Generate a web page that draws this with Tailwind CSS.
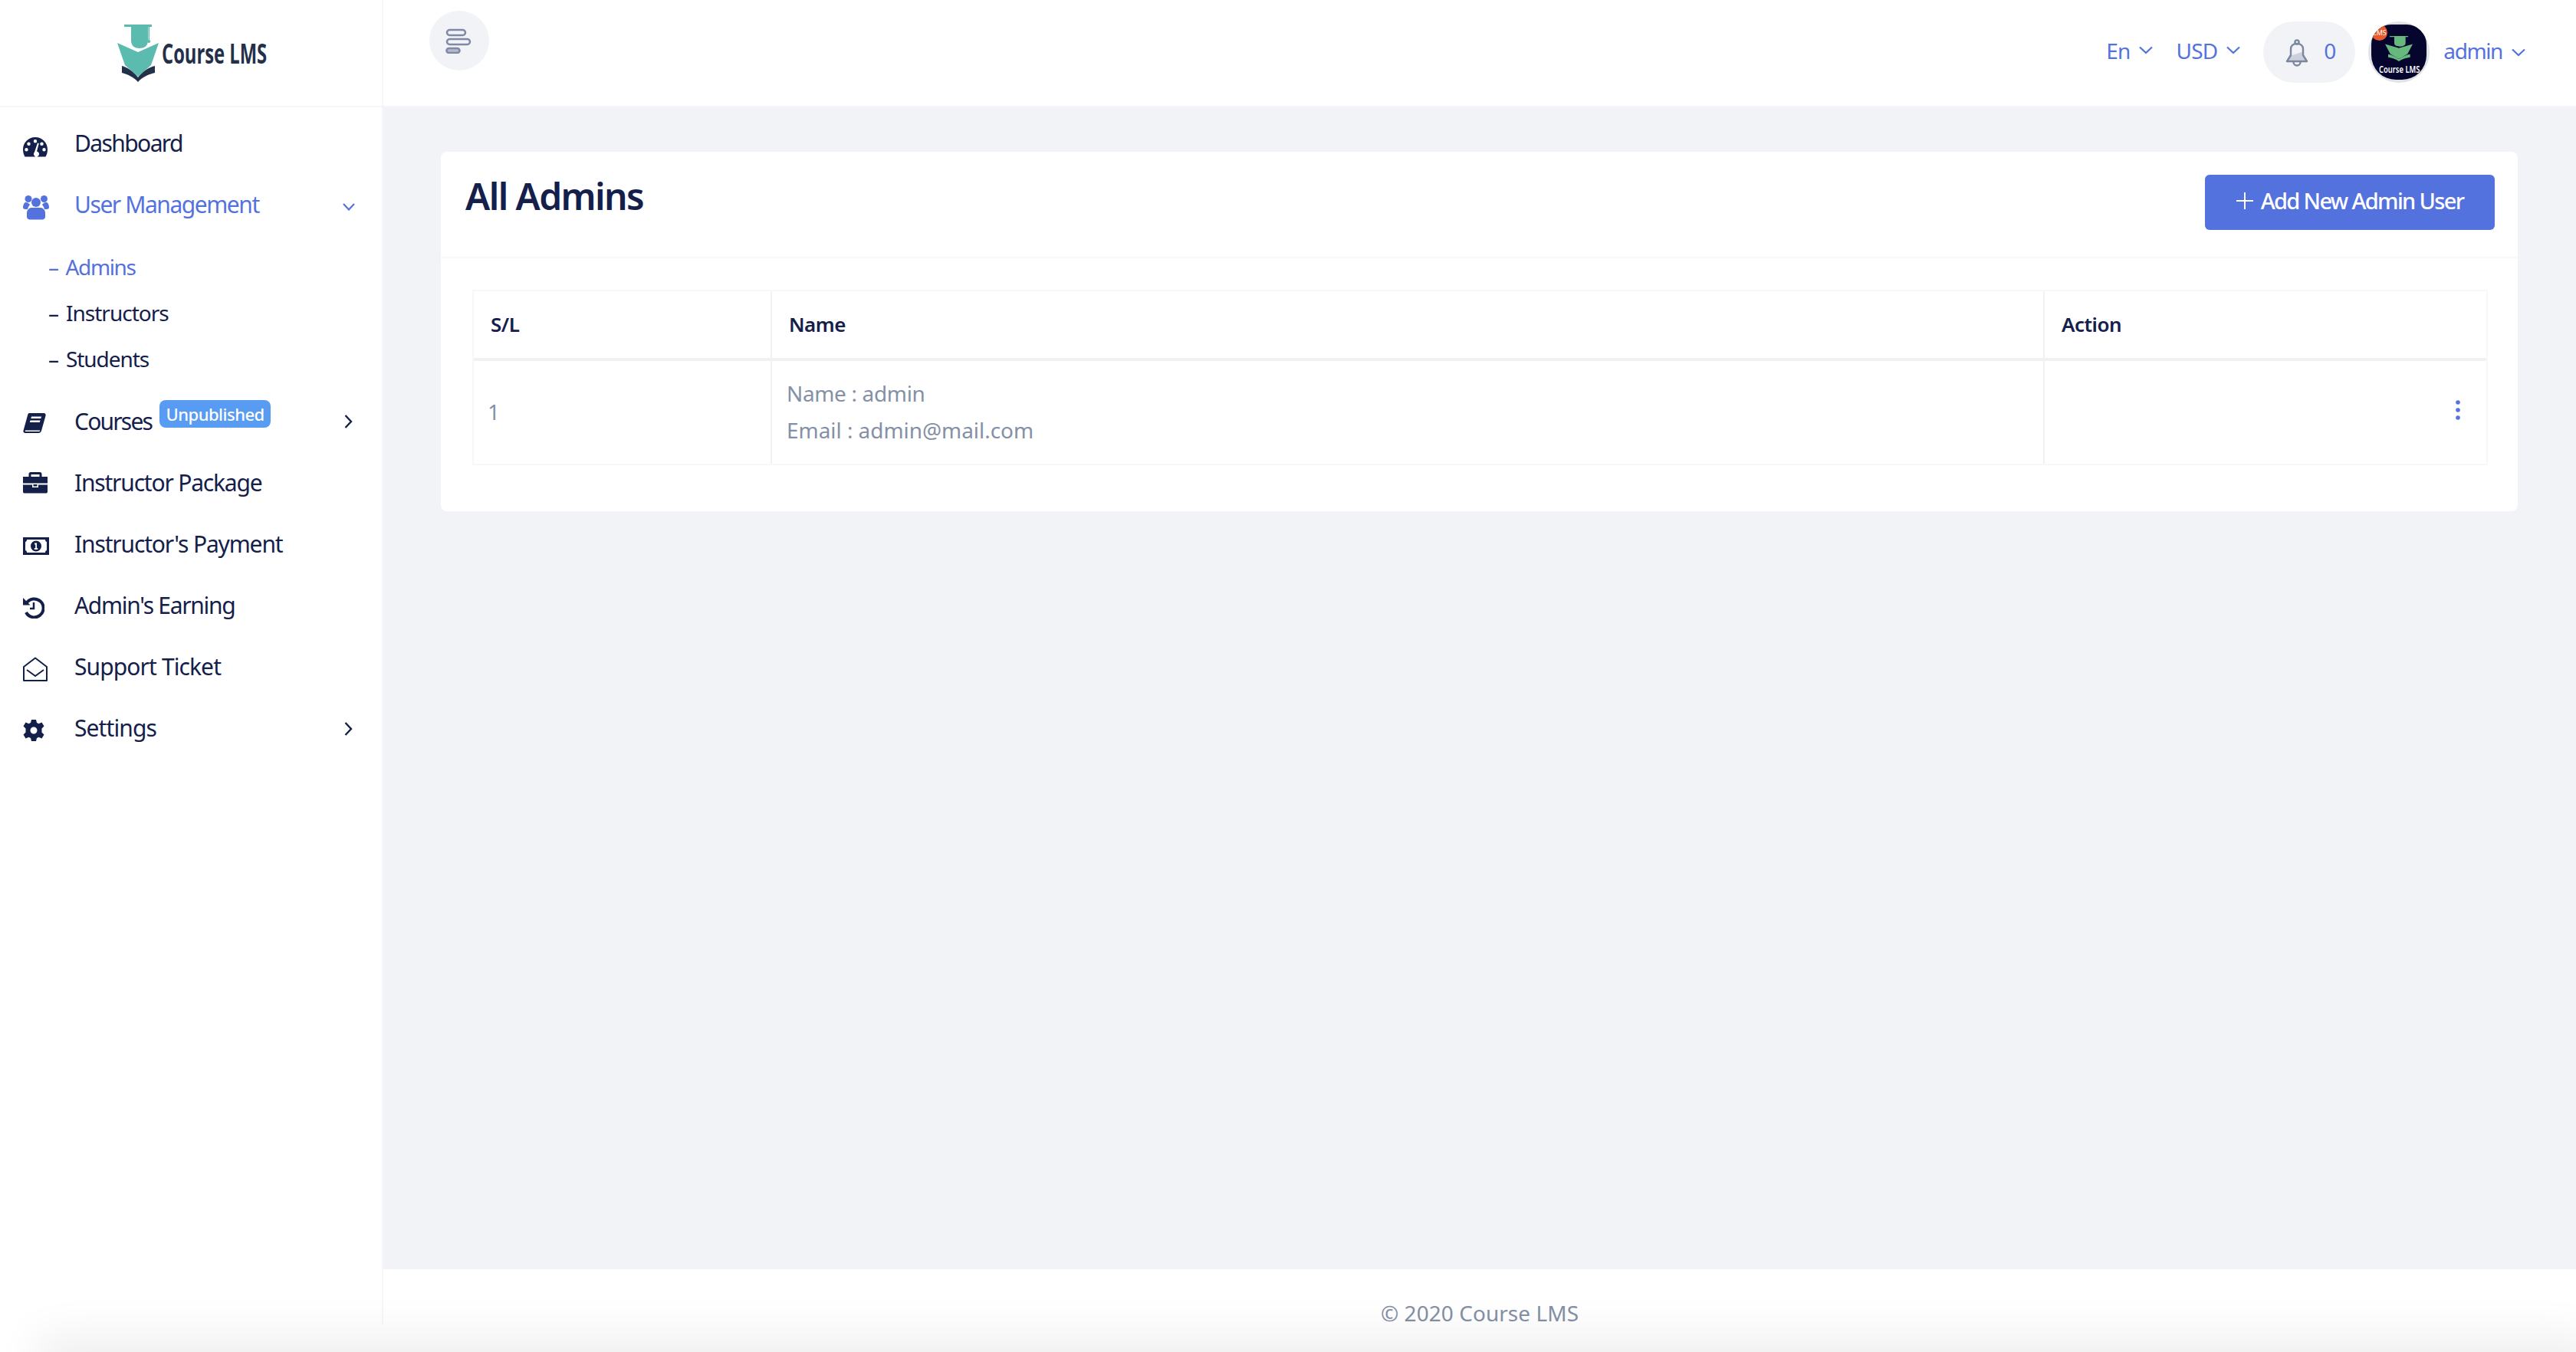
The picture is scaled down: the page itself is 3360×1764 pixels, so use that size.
<!DOCTYPE html>
<html><head><meta charset="utf-8"><script src="https://cdn.jsdelivr.net/npm/@tailwindcss/browser@4"></script></head>
<body class="m-0 font-['Noto_Sans',sans-serif] text-[#14204a]">
<div class="relative flex h-[1764px] w-[3360px] overflow-hidden bg-white">
  <aside class="flex h-[1728px] w-[500px] shrink-0 flex-col border-r-2 border-[#f6f6f8] bg-white">
    <div class="flex h-[140px] shrink-0 items-start border-b-2 border-[#f6f6f8] pl-[153px] pt-[32px]">
      <svg width="54" height="75" viewBox="0 0 54 75" class="shrink-0">
        <path d="M9 0H45V3H40V21C40 28 35 31 29 31C23 31 18 28 18 21V3H9Z" fill="#5bbbae"/>
        <path d="M40.500 3H42V20H40.500Z" fill="#5bbbae"/><circle cx="41.200" cy="22" r="2" fill="#5bbbae"/>
        <path d="M6 54C13 56 20 60 27 69C34 60 41 56 49 54V63C41 65 33 68 27 75C21 68 13 65 6 63Z" fill="#23304a"/>
        <path d="M0 24L27 36L54 24L44 53L27 68L10 53Z" fill="#5bbbae"/>
      </svg>
      <span class="ml-[4px] mt-[14px] inline-block origin-left scale-x-[0.66] text-[36px] leading-[48px] font-bold text-[#23304a] font-['Open_Sans',sans-serif] whitespace-nowrap">Course LMS</span>
    </div>
    <nav class="flex flex-col pl-[30px] pr-[34px] pt-[6px] text-[30px]">
      <div class="flex h-[80px] items-center">
        <svg width="32" height="26" viewBox="0 0 32 26" class="mt-[11px] shrink-0"><path fill="#14204a" fill-rule="evenodd" d="M16 0C7 0 0 7 0 16C0 20 1 23 2.500 25.500H29.500C31 23 32 20 32 16C32 7 25 0 16 0ZM16 3A2.200 2.200 0 1 1 16 7.400A2.200 2.200 0 1 1 16 3ZM7.500 6.500A2.200 2.200 0 1 1 7.500 11A2.200 2.200 0 1 1 7.500 6.500ZM24.500 6.500A2.200 2.200 0 1 1 24.500 11A2.200 2.200 0 1 1 24.500 6.500ZM4.500 14A2.200 2.200 0 1 1 4.500 18.400A2.200 2.200 0 1 1 4.500 14ZM27.500 14A2.200 2.200 0 1 1 27.500 18.400A2.200 2.200 0 1 1 27.500 14ZM19 7.500L20.800 8L18 18.500A3.500 3.500 0 1 1 15 19.500Z"/></svg>
        <span class="ml-[35px] tracking-[-1.6px]">Dashboard</span>
      </div>
      <div class="flex h-[80px] items-center text-[#5472de]">
        <svg width="34" height="32" viewBox="0 0 34 32" class="mt-[10px] shrink-0" fill="#5472de"><circle cx="7" cy="4.500" r="4.500"/><circle cx="27.500" cy="4.500" r="4.500"/><circle cx="17" cy="9" r="6"/><path d="M3 9C1 10 0 13 0 15.500C0 17 1 18 3 18H6C6.500 15 8 13.500 9 12C8 10 5 8.500 3 9Z"/><path d="M31 9C33 10 34 13 34 15.500C34 17 33 18 31 18H28C27.500 15 26 13.500 25 12C26 10 29 8.500 31 9Z"/><path d="M11 16H23C26 16 29 19 29 23V28C29 30 27 31.500 25 31.500H9C7 31.500 5 30 5 28V23C5 19 8 16 11 16Z"/></svg>
        <span class="ml-[33px] tracking-[-1.45px]">User Management</span>
        <svg width="16" height="10" viewBox="0 0 16 10" class="ml-auto mr-[1px] mt-[8px]" fill="none" stroke="#5472de" stroke-width="2.200"><path d="M1 1L8 8.500L15 1"/></svg>
      </div>
      <div class="flex flex-col pl-[33px] pt-[12px] text-[28px]">
        <div class="flex h-[60px] items-center tracking-[-1.4px] text-[#5472de]"><span class="mr-[10px]">–</span>Admins</div>
        <div class="flex h-[60px] items-center tracking-[-1px]"><span class="mr-[10px]">–</span>Instructors</div>
        <div class="flex h-[60px] items-center tracking-[-1.05px]"><span class="mr-[10px]">–</span>Students</div>
      </div>
      <div class="mt-[11px] flex h-[80px] items-center">
        <svg width="30" height="28" viewBox="0 0 30 28" class="mt-[7px] shrink-0"><path fill="#14204a" fill-rule="evenodd" d="M8 0H27C29 0 30 1.500 29.500 3.500L24 23C23.500 25 22 26 20 26H3C1 26 0 24.500 .5 23L1 21L6 3C6.500 1 7 0 8 0ZM11 4.500L10.300 7H23.300L24 4.500ZM9.500 9.500L8.800 12H21.800L22.500 9.500ZM3 22.500C2.500 23.500 3 24 4 24H20.500C21.500 24 22 23.500 22.300 22.500Z"/></svg>
        <span class="ml-[37px] tracking-[-1.8px]">Courses</span>
        <span class="ml-[10px] mt-[-18px] flex h-[36px] w-[145px] items-center justify-center rounded-[8px] bg-[#589bf3] text-[22px] font-medium tracking-[-0.5px] text-white">Unpublished</span>
        <svg width="11" height="18" viewBox="0 0 11 18" class="ml-auto mr-[4px] mt-[2px]" fill="none" stroke="#14204a" stroke-width="2.400"><path d="M1.500 1L9 9L1.500 17"/></svg>
      </div>
      <div class="flex h-[80px] items-center">
        <svg width="32" height="28" viewBox="0 0 32 28" class="mt-[2px] shrink-0"><path fill="#14204a" fill-rule="evenodd" d="M10 0H22C23.500 0 24.500 1 24.500 2.500V6H32V14.500H0V6H7.500V2.500C7.500 1 8.500 0 10 0ZM10.500 3V6H21.500V3ZM0 16.500H12V20H20V16.500H32V25.500C32 27 31 27.500 30 27.500H2C1 27.500 0 27 0 25.500ZM13.500 16H18.500V18.500H13.500Z"/></svg>
        <span class="ml-[35px] tracking-[-1.2px]">Instructor Package</span>
      </div>
      <div class="flex h-[80px] items-center">
        <svg width="34" height="23" viewBox="0 0 34 23" class="mt-[7px] shrink-0"><path fill="#14204a" fill-rule="evenodd" d="M0 0H34V23H0ZM5 3C5 5 4 6 3 6V17C4 17 5 18 5 20H29C29 18 30 17 31 17V6C30 6 29 5 29 3ZM17 4.500A7 7 0 1 1 17 18.500A7 7 0 1 1 17 4.500ZM15 7.500V9.500H16.200V14H14.800V16H19.200V14H18V7.500Z"/></svg>
        <span class="ml-[33px] tracking-[-1.15px]">Instructor's Payment</span>
      </div>
      <div class="flex h-[80px] items-center">
        <svg width="28" height="28" viewBox="0 0 28 28" class="mt-[7px] shrink-0"><path fill="none" stroke="#14204a" stroke-width="4" d="M4.500 8A12 12 0 1 1 4 20"/><path fill="#14204a" d="M0 1L9.500 10.500H0Z"/><path fill="none" stroke="#14204a" stroke-width="2.500" d="M14 7V15H9"/></svg>
        <span class="ml-[39px] tracking-[-1.3px]">Admin's Earning</span>
      </div>
      <div class="flex h-[80px] items-center">
        <svg width="32" height="32" viewBox="0 0 32 32" class="mt-[7px] shrink-0" fill="none" stroke="#14204a" stroke-width="2"><path d="M1 13L16 1.500L31 13V31H1Z" stroke-linejoin="round"/><path d="M5 17L16 25L27 17"/></svg>
        <span class="ml-[35px] tracking-[-0.9px]">Support Ticket</span>
      </div>
      <div class="flex h-[80px] items-center">
        <svg width="28" height="28" viewBox="0 0 28 28" class="mt-[7px] shrink-0"><path fill="#14204a" fill-rule="evenodd" d="M11 0H17L18 4L20.500 5.200L24.500 3.500L27.500 8.500L24.500 11.500V16.500L27.500 19.500L24.500 24.500L20.500 22.800L18 24L17 28H11L10 24L7.500 22.800L3.500 24.500L.5 19.500L3.500 16.500V11.500L.5 8.500L3.500 3.500L7.500 5.200L10 4ZM14 9.500A4.500 4.500 0 1 0 14 18.500A4.500 4.500 0 1 0 14 9.500Z"/></svg>
        <span class="ml-[39px] tracking-[-0.9px]">Settings</span>
        <svg width="11" height="18" viewBox="0 0 11 18" class="ml-auto mr-[4px] mt-[4px]" fill="none" stroke="#14204a" stroke-width="2.400"><path d="M1.500 1L9 9L1.500 17"/></svg>
      </div>
    </nav>
  </aside>
  <div class="flex min-w-0 flex-1 flex-col">
    <header class="flex h-[140px] shrink-0 items-start border-b-2 border-[#f6f6f8] bg-white">
      <div class="ml-[60px] mt-[14px] flex h-[78px] w-[78px] items-center justify-center rounded-full bg-[#f1f3f7]">
        <svg width="34" height="33" viewBox="0 0 34 33" class="mr-[2px]" fill="none" stroke="#7f89a6" stroke-width="2.500"><rect x="2" y="2" width="24" height="7" rx="3.500"/><rect x="2" y="14" width="30" height="7" rx="3.500"/><rect x="1.500" y="26" width="17" height="6" rx="3" fill="#b4bac9"/></svg>
      </div>
      <div class="ml-auto mr-[66px] mt-[28px] flex items-center text-[28px] tracking-[-0.8px] text-[#5472de]">
        <span class="mb-[4px]">En</span>
        <svg width="18" height="11" viewBox="0 0 18 11" class="ml-[12px] mb-[6px]" fill="none" stroke="#5472de" stroke-width="2.200"><path d="M1 1.500L9 9L17 1.500"/></svg>
        <span class="ml-[30px] mb-[4px]">USD</span>
        <svg width="18" height="11" viewBox="0 0 18 11" class="ml-[12px] mb-[6px]" fill="none" stroke="#5472de" stroke-width="2.200"><path d="M1 1.500L9 9L17 1.500"/></svg>
        <div class="ml-[30px] flex h-[80px] w-[120px] items-center rounded-[40px] bg-[#f1f3f7] pl-[29px]">
          <svg width="30" height="36" viewBox="0 0 30 36" class="mt-[2px]" fill="none" stroke="#7b86a0" stroke-width="2.400"><path d="M6 22L24 16V22L27 28H3Z" fill="#7b86a0" fill-opacity=".3" stroke="none"/><path d="M7 13C7 9 10 6 15 6C20 6 23 9 23 13V21L28 29H2L7 21Z" stroke-linejoin="round"/><circle cx="15" cy="4" r="2.600"/><path d="M10.500 30C10.500 33 13 34.500 15 34.500C17 34.500 19.500 33 19.500 30"/></svg>
          <span class="ml-[20px] mb-[4px]">0</span>
        </div>
        <div class="ml-[17px] flex h-[80px] w-[80px] items-center justify-center overflow-hidden rounded-full bg-[#e2e3e7]">
          <div class="relative h-[72px] w-[72px] overflow-hidden rounded-b-[32px] rounded-t-[26px] bg-[#05052e]">
            <svg width="36" height="33" viewBox="0 0 54 75" preserveAspectRatio="none" class="absolute left-[18px] top-[15px]"><path d="M9 0H45V3H40V21C40 28 35 31 29 31C23 31 18 28 18 21V3H9Z" fill="#67b87e"/><path d="M6 54C13 56 20 60 27 69C34 60 41 56 49 54V63C41 65 33 68 27 75C21 68 13 65 6 63Z" fill="#67b87e"/><path d="M0 24L27 36L54 24L44 53L27 68L10 53Z" fill="#67b87e"/></svg>
            <span class="absolute left-0 top-[48px] w-full scale-x-[0.72] text-center text-[13px] leading-[20px] font-semibold tracking-normal text-white whitespace-nowrap">Course LMS</span>
            <span class="absolute left-[0px] top-[0px] h-[21px] w-[21px] rounded-full bg-[#e85a2b] text-center text-[9px] leading-[21px] tracking-normal text-white">LMS</span>
          </div>
        </div>
        <span class="ml-[18px] mb-[4px] tracking-[-1.4px]">admin</span>
        <svg width="18" height="11" viewBox="0 0 18 11" class="ml-[12px]" fill="none" stroke="#5472de" stroke-width="2.200"><path d="M1 1.500L9 9L17 1.500"/></svg>
      </div>
    </header>
    <main class="min-h-0 flex-1 bg-[#f1f3f7] pl-[75px] pr-[76px] pt-[58px]">
      <section class="h-[469px] rounded-[8px] bg-white">
        <div class="flex h-[139px] items-start border-b-2 border-[#f8f8f9] pl-[30px] pr-[30px]">
          <h1 class="ml-[2px] mt-[26px] text-[48px] leading-[64px] font-semibold tracking-[-1.6px]">All Admins</h1>
          <button class="ml-auto mt-[30px] flex h-[72px] w-[378px] items-center justify-center rounded-[6px] bg-[#5472de] pb-[4px] text-[29px] font-medium tracking-[-1.65px] text-white">
            <svg width="22" height="22" viewBox="0 0 22 22" class="mr-[10px]" stroke="white" stroke-width="2"><path d="M11 0V22M0 11H22"/></svg>Add New Admin User
          </button>
        </div>
        <div class="pl-[41px] pr-[39px] pt-[41px]">
          <div class="grid h-[229px] grid-cols-[389px_1660px_1fr] grid-rows-[91px_134px] border-x-2 border-y-2 border-[#f8f8f9]">
            <div class="flex items-center border-b-4 border-r-2 border-b-[#f1f1f3] border-r-[#f1f1f3] pl-[22px] text-[26px] font-semibold tracking-[-0.5px]">S/L</div>
            <div class="flex items-center border-b-4 border-r-2 border-b-[#f1f1f3] border-r-[#f1f1f3] pl-[22px] text-[26px] font-semibold tracking-[-0.5px]">Name</div>
            <div class="flex items-center border-b-4 border-b-[#f1f1f3] pl-[22px] text-[26px] font-semibold tracking-[-0.5px]">Action</div>
            <div class="flex items-center border-r-2 border-[#f1f1f3] pb-[3px] pl-[18px] text-[28px] text-[#8490a6]">1</div>
            <div class="flex flex-col justify-center border-r-2 border-[#f1f1f3] pb-[3px] pl-[19px] text-[28px] leading-[48px] text-[#8490a6]"><div class="tracking-[-0.35px]">Name : admin</div><div class="tracking-[-0.05px]">Email : admin@mail.com</div></div>
            <div class="flex items-center justify-end pr-[34px]">
              <svg width="6" height="26" viewBox="0 0 6 26" fill="#5472de" class="mb-[6px]"><circle cx="3" cy="3" r="2.800"/><circle cx="3" cy="13" r="2.800"/><circle cx="3" cy="23" r="2.800"/></svg>
            </div>
          </div>
        </div>
      </section>
    </main>
    <footer class="flex h-[108px] shrink-0 items-start justify-center bg-white pt-[37px] text-[28px] leading-[40px] tracking-[0.05px] text-[#8490a6]">© 2020 Course LMS</footer>
  </div>
  <div class="absolute bottom-[-40px] left-[70px] right-0 h-[40px] shadow-[0_0_60px_20px_rgba(0,0,0,0.07)]"></div>
</div>
</body></html>
